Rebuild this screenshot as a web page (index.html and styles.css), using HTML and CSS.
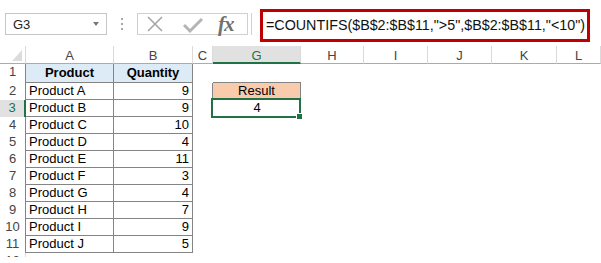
FILE: index.html
```html
<!DOCTYPE html>
<html lang="en">
<head>
    <meta charset="UTF-8">
    <title>COUNTIFS example</title>
    <link rel="stylesheet" href="styles.css">
</head>
<body>
    <div class="topbar">
        <div class="namebox">
            <span>G3</span>
            <span class="dropdown"></span>
        </div>
        <svg class="grip" width="3" height="12" viewBox="0 0 3 12">
            <rect x="0" y="0" width="2" height="2" fill="#a6a6a6"/>
            <rect x="0" y="5" width="2" height="2" fill="#a6a6a6"/>
            <rect x="0" y="10" width="2" height="2" fill="#a6a6a6"/>
        </svg>
        <div class="fxbox">
            <svg class="btn-cancel" width="16" height="16" viewBox="0 0 16 16">
                <path d="M1 1 L15 15 M15 1 L1 15" stroke="#a6a6a6" stroke-width="1.6" fill="none"/>
            </svg>
            <svg class="btn-enter" width="20" height="17" viewBox="0 0 20 17">
                <path d="M1 8 L7 14 L19 2" stroke="#b4b4b4" stroke-width="3" fill="none"/>
            </svg>
            <span class="fx">fx</span>
        </div>
        <div class="formula">
            <span class="formula-text">=COUNTIFS($B$2:$B$11,"&gt;5",$B$2:$B$11,"&lt;10")</span>
            <div class="highlight"></div>
        </div>
    </div>

    <div class="sheet">
        <!-- column headers -->
        <div class="hd corner"><span class="corner-tri"></span></div>
        <div class="hd">A</div>
        <div class="hd">B</div>
        <div class="hd">C</div>
        <div class="hd sel">G</div>
        <div class="hd">H</div>
        <div class="hd">I</div>
        <div class="hd">J</div>
        <div class="hd">K</div>
        <div class="hd">L</div>

        <!-- row 1 -->
        <div class="rh">1</div>
        <div class="d th">Product</div>
        <div class="d th">Quantity</div>
        <div></div>
        <div class="res-top"></div>
        <div></div><div></div><div></div><div></div><div></div>

        <!-- row 2 -->
        <div class="rh">2</div>
        <div class="d">Product A</div>
        <div class="d num">9</div>
        <div class="res-left"></div>
        <div class="res">Result</div>
        <div></div><div></div><div></div><div></div><div></div>

        <!-- row 3 -->
        <div class="rh sel">3</div>
        <div class="d">Product B</div>
        <div class="d num">9</div>
        <div></div>
        <div class="active">4<span class="handle"></span></div>
        <div></div><div></div><div></div><div></div><div></div>

        <!-- row 4 -->
        <div class="rh">4</div>
        <div class="d">Product C</div>
        <div class="d num">10</div>
        <div></div><div></div><div></div><div></div><div></div><div></div><div></div>

        <!-- row 5 -->
        <div class="rh">5</div>
        <div class="d">Product D</div>
        <div class="d num">4</div>
        <div></div><div></div><div></div><div></div><div></div><div></div><div></div>

        <!-- row 6 -->
        <div class="rh">6</div>
        <div class="d">Product E</div>
        <div class="d num">11</div>
        <div></div><div></div><div></div><div></div><div></div><div></div><div></div>

        <!-- row 7 -->
        <div class="rh">7</div>
        <div class="d">Product F</div>
        <div class="d num">3</div>
        <div></div><div></div><div></div><div></div><div></div><div></div><div></div>

        <!-- row 8 -->
        <div class="rh">8</div>
        <div class="d">Product G</div>
        <div class="d num">4</div>
        <div></div><div></div><div></div><div></div><div></div><div></div><div></div>

        <!-- row 9 -->
        <div class="rh">9</div>
        <div class="d">Product H</div>
        <div class="d num">7</div>
        <div></div><div></div><div></div><div></div><div></div><div></div><div></div>

        <!-- row 10 -->
        <div class="rh">10</div>
        <div class="d">Product I</div>
        <div class="d num">9</div>
        <div></div><div></div><div></div><div></div><div></div><div></div><div></div>

        <!-- row 11 -->
        <div class="rh">11</div>
        <div class="d">Product J</div>
        <div class="d num">5</div>
        <div></div><div></div><div></div><div></div><div></div><div></div><div></div>

        <!-- row 12 (cut off) -->
        <div class="rh last">12</div>
    </div>
</body>
</html>
```

FILE: styles.css
```css
body {
    margin: 0;
    background: #fff;
    font-family: "Liberation Sans", Arial, sans-serif;
    color: #000;
}

/* formula bar */
.topbar {
    display: flex;
    align-items: flex-start;
    height: 46px;
    padding-top: 13px;
    box-sizing: border-box;
}
.namebox {
    display: flex;
    align-items: center;
    width: 102px;
    height: 22px;
    margin-left: 5px;
    padding-left: 7px;
    box-sizing: border-box;
    border: 1px solid #c6c6c6;
    font-size: 13px;
    color: #222;
}
.dropdown {
    margin-left: auto;
    margin-right: 7px;
    width: 0;
    height: 0;
    border-left: 3.5px solid transparent;
    border-right: 3.5px solid transparent;
    border-top: 4px solid #777;
}
.grip {
    margin: 5px 0 0 14px;
}
.fxbox {
    display: flex;
    align-items: center;
    width: 111px;
    height: 22px;
    margin-left: 13px;
    padding-left: 9px;
    box-sizing: border-box;
    border: 1px solid #d0d0d0;
}
.btn-enter {
    margin-left: 20px;
    margin-top: 2px;
}
.fx {
    margin-left: 15px;
    font-family: "Liberation Serif", "Times New Roman", serif;
    font-style: italic;
    font-weight: bold;
    font-size: 21px;
    color: #707070;
    letter-spacing: -1px;
    line-height: 20px;
}
.formula {
    position: relative;
    flex: 1;
    height: 22px;
    margin-left: 3px;
    padding-left: 14px;
    border-left: 1px solid #d0d0d0;
    display: flex;
    align-items: center;
}
.formula-text {
    font-size: 14.3px;
    color: #111;
    white-space: nowrap;
    margin-top: 2px;
}
.highlight {
    position: absolute;
    left: 8px;
    top: -4px;
    width: 330px;
    height: 33px;
    box-sizing: border-box;
    border: 3px solid #c00000;
}

/* worksheet */
.sheet {
    display: grid;
    grid-template-columns: 26px 88px 79px 20px 88px 63px 64px 64px 65px 1fr;
    grid-template-rows: 18px 19px repeat(11, 17px);
    height: 211px;
    overflow: hidden;
    font-size: 13px;
}
.sheet > div {
    box-sizing: border-box;
    line-height: 16px;
    white-space: nowrap;
}
.hd {
    padding-top: 3px;
    text-align: center;
    color: #444;
    border-right: 1px solid #dadada;
    border-bottom: 1px solid #ababab;
}
.sheet > .hd {
    line-height: 14px;
}
.hd.sel {
    background: #e1e1e1;
    color: #217346;
    border-bottom: 2px solid #217346;
}
.corner {
    position: relative;
}
.corner-tri {
    position: absolute;
    right: 3px;
    bottom: 2px;
    width: 0;
    height: 0;
    border-left: 10px solid transparent;
    border-bottom: 11px solid #dcdcdc;
}
.rh {
    text-align: center;
    color: #444;
    border-right: 1px solid #848484;
}
.rh.sel {
    background: #e1e1e1;
    color: #217346;
    border-right: 2px solid #217346;
}
.rh.last {
    border-right-color: #dadada;
}
.d {
    padding: 0 3px;
    border-right: 1px solid #848484;
    border-bottom: 1px solid #848484;
}
.sheet > .th {
    font-weight: bold;
    text-align: center;
    background: #ddebf7;
    line-height: 18px;
}
.num {
    text-align: right;
}
.res-top {
    border-bottom: 1px solid #848484;
}
.res-left {
    border-right: 1px solid #848484;
}
.res {
    text-align: center;
    background: #f8cbad;
    border-right: 1px solid #848484;
    border-bottom: 1px solid #848484;
}
.active {
    position: relative;
    text-align: center;
}
.active::after {
    content: "";
    position: absolute;
    top: -2px;
    left: -2px;
    right: 0;
    bottom: -1px;
    border: 2px solid #217346;
}
.handle {
    position: absolute;
    right: -2px;
    bottom: -3px;
    width: 5px;
    height: 5px;
    background: #217346;
    border: 1px solid #fff;
    z-index: 1;
}
```
